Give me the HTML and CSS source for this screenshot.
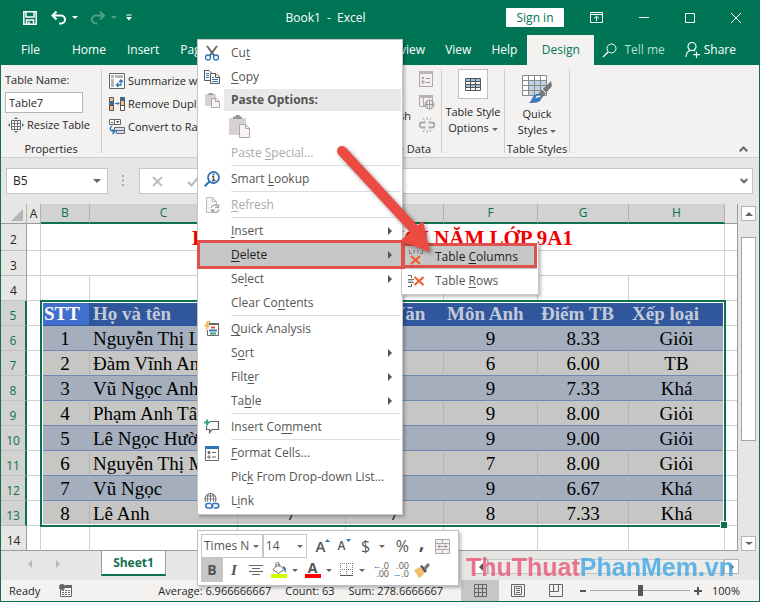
FILE: index.html
```html
<!DOCTYPE html>
<html lang="en">

<head>
    <meta charset="UTF-8">
    <meta name="viewport" content="width=device-width, initial-scale=1.0">
    <title>Book1 - Excel</title>
    <link rel="stylesheet" href="styles.css">
</head>

<body>
    <div class="window">

        <!-- Title bar -->
        <header class="titlebar">
            <div class="quick-access">
                <button class="icon-btn" aria-label="Save">
                    <svg width="14" height="14" viewBox="0 0 14 14"><path d="M0.8 0.8H13.2V13.2H0.8Z M3 1V6H11V1 M3.5 13V9H10.5V13 M6 10.5V13" fill="none" stroke="#fff" stroke-width="1.5"/></svg>
                </button>
                <button class="icon-btn undo" aria-label="Undo">
                    <svg width="16" height="14" viewBox="0 0 16 14"><path d="M1.5 4.5H10A4 4 0 0 1 10 12.5H8M5.5 0.5L1.5 4.5L5.5 8.5" fill="none" stroke="#fff" stroke-width="2"/></svg>
                    <span class="caret light"></span>
                </button>
                <button class="icon-btn faded" aria-label="Redo">
                    <svg width="16" height="14" viewBox="0 0 16 14"><path d="M14 4.5H6A4 4 0 0 0 6 12.5H7.5M10 0.5L14 4.5L10 8.5" fill="none" stroke="#fff" stroke-width="2"/></svg>
                    <span class="caret light"></span>
                </button>
                <button class="icon-btn customize" aria-label="Customize">
                    <svg width="6" height="7" viewBox="0 0 6 7"><path d="M0.5 1H5.5" stroke="#fff" stroke-width="1"/><path d="M0 3H6L3 6.5Z" fill="#fff"/></svg>
                </button>
            </div>
            <div class="title">Book1&nbsp; -&nbsp; Excel</div>
            <div class="window-controls">
                <button class="sign-in">Sign in</button>
                <button class="icon-btn" aria-label="Ribbon display options">
                    <svg width="13" height="11" viewBox="0 0 13 11"><path d="M0.5 0.5H12.5V10.5H0.5Z M0.5 2.5H12.5 M6.5 9V4.5 M4 6.5L6.5 4.2L9 6.5" fill="none" stroke="#fff"/></svg>
                </button>
                <button class="icon-btn" aria-label="Minimize">
                    <svg width="10" height="10" viewBox="0 0 10 10"><path d="M0 4.5H10" stroke="#fff"/></svg>
                </button>
                <button class="icon-btn" aria-label="Maximize">
                    <svg width="10" height="10" viewBox="0 0 10 10"><path d="M0.5 0.5H9.5V9.5H0.5Z" fill="none" stroke="#fff"/></svg>
                </button>
                <button class="icon-btn" aria-label="Close">
                    <svg width="10" height="10" viewBox="0 0 10 10"><path d="M0 0L10 10M10 0L0 10" stroke="#fff"/></svg>
                </button>
            </div>
        </header>

        <!-- Ribbon tabs -->
        <nav class="tabs">
            <div class="tabs-left">
                <button class="file">File</button>
                <button>Home</button>
                <button>Insert</button>
                <button>Page Layout</button>
                <button>Formulas</button>
            </div>
            <div class="tabs-right">
                <button>Review</button>
                <button>View</button>
                <button>Help</button>
                <button class="active">Design</button>
                <button class="tell-me">
                    <svg width="15" height="15" viewBox="0 0 15 15"><circle cx="9.5" cy="5.5" r="4.5" fill="none" stroke="#fff"/><path d="M6.3 8.7L1 14" stroke="#fff" stroke-width="1.3"/></svg>
                    Tell me
                </button>
                <button class="share">
                    <svg width="16" height="16" viewBox="0 0 16 16"><circle cx="7" cy="4.5" r="4" fill="none" stroke="#fff" stroke-width="1.2"/><path d="M1 15C1 11 3 9 5.5 8.2M8.5 8.2L10 9M11.5 9.5V16M8.3 12.7H15" fill="none" stroke="#fff" stroke-width="1.2"/></svg>
                    Share
                </button>
            </div>
        </nav>

        <!-- Ribbon -->
        <section class="ribbon">
            <div class="group properties">
                <div class="group-body">
                    <label for="table-name">Table Name:</label>
                    <input id="table-name" type="text" value="Table7">
                    <button class="tool resize">
                        <svg width="16" height="16" viewBox="0 0 16 16"><path d="M3.5 3.5H12.5V12.5H3.5Z" fill="#fff" stroke="#666"/><path d="M3.5 6.5H12.5M3.5 9.5H12.5M6.5 3.5V12.5M9.5 3.5V12.5" stroke="#777"/><path d="M8 0L10 2H6ZM8 16L10 14H6ZM0 8L2 6V10ZM16 8L14 6V10Z" fill="#2e75b6"/></svg>
                        Resize Table
                    </button>
                </div>
                <div class="group-title">Properties</div>
            </div>
            <div class="group tools">
                <div class="group-body">
                    <button class="tool">
                        <svg width="16" height="16" viewBox="0 0 16 16"><path d="M0.5 0.5H15.5V15.5H0.5Z" fill="#fff" stroke="#666"/><path d="M2 2H5V5H2ZM6 2H14V5H6ZM2 6H5V14H2Z" fill="#b5b5b5"/><path d="M8 12H12V7M9.5 10L7.5 12L9.5 14M10 9L12 7L14 9" fill="none" stroke="#2e75b6" stroke-width="1.3"/></svg>
                        Summarize with PivotTable
                    </button>
                    <button class="tool">
                        <svg width="16" height="16" viewBox="0 0 16 16"><path d="M0.5 1.5H4.5V14.5H0.5ZM11.5 1.5H15.5V14.5H11.5Z" fill="#f4c27a" stroke="#555"/><path d="M0 5H5V9H0ZM11 1H16V5H11Z" fill="#44668c"/><path d="M12 9.5H15V14H12Z" fill="#fff"/><path d="M0.5 9.5H4.5M11.5 9.5H15.5" stroke="#555"/><path d="M6 7.5H10M8.5 6L10 7.5L8.5 9" fill="none" stroke="#2e75b6"/></svg>
                        Remove Duplicates
                    </button>
                    <button class="tool">
                        <svg width="16" height="16" viewBox="0 0 16 16"><path d="M0.5 0.5H11.5V5.5H0.5ZM5.5 0.5V5.5" fill="#fff" stroke="#666"/><path d="M7 2H10.5L8.7 4.2Z M2 3H4V4H2Z" fill="#555"/><path d="M5.5 8.5H15.5V11.5H5.5ZM7.5 11.5H15.5V14.5H7.5Z" fill="#d5e1ee" stroke="#667"/><path d="M3 7C0 9 1 12.5 5.5 12.5M3.5 10.5L5.8 12.5L3.5 15" fill="none" stroke="#2e75b6" stroke-width="1.4"/></svg>
                        Convert to Range
                    </button>
                </div>
                <div class="group-title">Tools</div>
            </div>
            <div class="group external">
                <div class="external-body">
                    <button class="big-tool">
                        <svg width="30" height="32" viewBox="0 0 30 32"><path d="M24 15A9 9 0 0 0 9 10M24 6V15H16M6 19A9 9 0 0 0 21 24M6 28V19H14" fill="none" stroke="#b5b5b5" stroke-width="3"/></svg>
                        <span>Refresh</span>
                    </button>
                    <div class="icon-stack">
                        <svg width="14" height="16" viewBox="0 0 14 16"><path d="M0.5 0.5H13.5V15.5H0.5Z" fill="#f4eef0" stroke="#aaa"/><path d="M0 0H14V3H0Z" fill="#b8b3b4"/><circle cx="4" cy="7" r="1.3" fill="#aaa"/><circle cx="4" cy="11" r="1.2" fill="none" stroke="#999"/><path d="M7 7.5H11M7 11.5H11" stroke="#999"/></svg>
                        <svg width="16" height="16" viewBox="0 0 16 16"><path d="M0.5 1.5H13.5V12.5H0.5ZM4.5 1.5V12.5" fill="#f4eef0" stroke="#aaa"/><path d="M0 1H14V4H0Z" fill="#b8b3b4"/><circle cx="10.5" cy="10.5" r="4.5" fill="#f4eef0" stroke="#999"/><path d="M6 10.5H15M10.5 6V15M8 7C7.5 10 7.5 12 8.5 14.5M13 7C13.5 10 13.5 12 12.5 14.5" stroke="#999" fill="none"/></svg>
                        <svg width="16" height="16" viewBox="0 0 16 16"><path d="M6.5 5.5H3A2.5 2.5 0 0 0 3 10.5H6.5M9.5 5.5H13A2.5 2.5 0 0 1 13 10.5H9.5" fill="none" stroke="#aaa" stroke-width="2"/><path d="M8 0V3M8 13V16M4 1L5.5 3.5M12 1L10.5 3.5M4 15L5.5 12.5M12 15L10.5 12.5" stroke="#aaa"/></svg>
                    </div>
                </div>
                <div class="group-title">External Table Data</div>
            </div>
            <div class="group options">
                <button class="big-tool">
                    <span class="icon-frame">
                        <svg width="16" height="13" viewBox="0 0 16 13"><path d="M0.5 0.5H15.5V12.5H0.5Z" fill="#fff" stroke="#555"/><path d="M1 1H15V3H1ZM1 6H15V9H1Z" fill="#9fc0dc"/><path d="M0.5 3.5H15.5M0.5 6.5H15.5M0.5 9.5H15.5M5.5 0.5V12.5M10.5 0.5V12.5" stroke="#555"/></svg>
                    </span>
                    <span>Table Style<br>Options <i class="caret"></i></span>
                </button>
            </div>
            <div class="group styles">
                <button class="big-tool quick-styles">
                    <svg width="30" height="28" viewBox="0 0 30 28"><path d="M0.5 0.5H24.5V20.5H0.5Z" fill="#fff"/><path d="M6 5H24V20H6Z" fill="#bcd3e8"/><path d="M0.5 0.5H24.5V20.5H0.5ZM0.5 5.5H24.5M0.5 10.5H24.5M0.5 15.5H24.5M6.5 0.5V20.5M12.5 0.5V20.5M18.5 0.5V20.5" fill="none" stroke="#888"/><path d="M29 6L15 20L19 24L30 11Z" fill="#777"/><path d="M20 14L24 18" stroke="#fff"/><path d="M7 28C10 26 10 20 15 19C19 19 21 23 18 26C15 28 11 28 7 28Z" fill="#3c78b8"/><path d="M14 23C15 21 17 21 18 22" stroke="#fff" stroke-width="1.5" fill="none"/></svg>
                    <span>Quick<br>Styles <i class="caret"></i></span>
                </button>
                <div class="group-title">Table Styles</div>
            </div>
            <button class="collapse" aria-label="Collapse the ribbon">
                <svg width="9" height="6" viewBox="0 0 9 6"><path d="M0.7 5.3L4.5 1.5L8.3 5.3" fill="none" stroke="#666" stroke-width="2"/></svg>
            </button>
        </section>

        <!-- Formula bar -->
        <section class="formula-bar">
            <div class="name-box">
                <input type="text" value="B5" aria-label="Name box">
                <span class="caret"></span>
            </div>
            <svg class="grip" width="3" height="12" viewBox="0 0 3 12"><path d="M0 0H2V2H0ZM0 4.5H2V6.5H0ZM0 9H2V11H0Z" fill="#aaa"/></svg>
            <div class="formula">
                <svg width="11" height="11" viewBox="0 0 11 11"><path d="M1 1L10 10M10 1L1 10" stroke="#bbb" stroke-width="1.8"/></svg>
                <svg width="12" height="11" viewBox="0 0 12 11"><path d="M1 6L4.5 9.5L11 1.5" fill="none" stroke="#bbb" stroke-width="2.2"/></svg>
                <input type="text" value="" aria-label="Formula">
                <svg width="8" height="6" viewBox="0 0 8 6"><path d="M0.7 1L4 4.3L7.3 1" fill="none" stroke="#666" stroke-width="2"/></svg>
            </div>
        </section>

        <!-- Worksheet -->
        <main class="sheet">
            <div class="grid">
                <table>
                    <colgroup>
                        <col class="c-num"><col class="c-a"><col class="c-b"><col class="c-c"><col class="c-d"><col class="c-e"><col class="c-f"><col class="c-g"><col class="c-h"><col>
                    </colgroup>
                    <thead>
                        <tr>
                            <th class="corner"><svg width="12" height="12" viewBox="0 0 12 12"><path d="M12 0V12H0Z" fill="#b5b5b5"/></svg></th>
                            <th class="plain">A</th>
                            <th>B</th>
                            <th>C</th>
                            <th>D</th>
                            <th>E</th>
                            <th>F</th>
                            <th>G</th>
                            <th>H</th>
                            <th class="rest"></th>
                        </tr>
                    </thead>
                    <tbody>
                        <tr class="title-row"><th>2</th><td></td><td class="sheet-title" colspan="7">BẢNG TỔNG KẾT CUỐI NĂM LỚP 9A1</td><td></td></tr>
                        <tr><th>3</th><td></td><td colspan="7"></td><td></td></tr>
                        <tr><th>4</th><td></td><td></td><td></td><td></td><td></td><td></td><td></td><td></td><td></td></tr>
                        <tr class="sel head"><th>5</th><td></td><td class="current">STT</td><td>Họ và tên</td><td>Môn Toán</td><td>Môn Văn</td><td>Môn Anh</td><td>Điểm TB</td><td>Xếp loại</td><td></td></tr>
                        <tr class="sel band"><th>6</th><td></td><td>1</td><td>Nguyễn Thị Lan</td><td>8</td><td>8</td><td>9</td><td>8.33</td><td>Giỏi</td><td></td></tr>
                        <tr class="sel"><th>7</th><td></td><td>2</td><td>Đàm Vĩnh Anh</td><td>6</td><td>6</td><td>6</td><td>6.00</td><td>TB</td><td></td></tr>
                        <tr class="sel band"><th>8</th><td></td><td>3</td><td>Vũ Ngọc Anh</td><td>7</td><td>6</td><td>9</td><td>7.33</td><td>Khá</td><td></td></tr>
                        <tr class="sel"><th>9</th><td></td><td>4</td><td>Phạm Anh Tâm</td><td>8</td><td>7</td><td>9</td><td>8.00</td><td>Giỏi</td><td></td></tr>
                        <tr class="sel band"><th>10</th><td></td><td>5</td><td>Lê Ngọc Hường</td><td>9</td><td>9</td><td>9</td><td>9.00</td><td>Giỏi</td><td></td></tr>
                        <tr class="sel"><th>11</th><td></td><td>6</td><td>Nguyễn Thị Mai</td><td>9</td><td>8</td><td>7</td><td>8.00</td><td>Giỏi</td><td></td></tr>
                        <tr class="sel band"><th>12</th><td></td><td>7</td><td>Vũ Ngọc</td><td>5</td><td>6</td><td>9</td><td>6.67</td><td>Khá</td><td></td></tr>
                        <tr class="sel"><th>13</th><td></td><td>8</td><td>Lê Anh</td><td>7</td><td>7</td><td>8</td><td>7.33</td><td>Khá</td><td></td></tr>
                        <tr class="last"><th>14</th><td></td><td></td><td></td><td></td><td></td><td></td><td></td><td></td><td></td></tr>
                    </tbody>
                </table>
                <div class="marquee"></div>
            </div>
            <div class="vscroll">
                <button aria-label="Scroll up"><span class="caret up"></span></button>
                <div class="thumb"></div>
                <button aria-label="Scroll down"><span class="caret"></span></button>
            </div>
        </main>

        <!-- Sheet tabs -->
        <section class="sheet-tabs">
            <div class="nav-arrows"><span class="tri left"></span><span class="tri"></span></div>
            <button class="sheet-tab">Sheet1</button>
            <div class="hscroll">
                <button aria-label="Scroll left"><span class="tri left"></span></button>
                <div class="track"></div>
                <button aria-label="Scroll right"><span class="tri"></span></button>
            </div>
            <div class="watermark">ThuThuat<span>PhanMem.vn</span></div>
        </section>

        <!-- Status bar -->
        <footer class="status-bar">
            <span class="ready">Ready</span>
            <svg width="13" height="13" viewBox="0 0 13 13"><path d="M1.5 3.5H12.5V12.5H1.5Z" fill="#fff" stroke="#666"/><path d="M6 1H13V4H6ZM3 6H5V7H3ZM6 6H8V7H6ZM9 6H11V7H9ZM3 8H5V9H3ZM6 8H8V9H6ZM9 8H11V9H9ZM3 10H5V11H3ZM6 10H8V11H6ZM9 10H11V11H9Z" fill="#666"/><circle cx="3" cy="3" r="3" fill="#666"/></svg>
            <div class="stats">
                <span>Average: 6.966666667</span>
                <span>Count: 63</span>
                <span>Sum: 278.6666667</span>
            </div>
            <div class="views">
                <button class="active" aria-label="Normal view">
                    <svg width="13" height="13" viewBox="0 0 13 13"><path d="M0.5 0.5H12.5V12.5H0.5ZM4.5 0.5V12.5M8.5 0.5V12.5M0.5 4.5H12.5M0.5 8.5H12.5" fill="none" stroke="#666"/></svg>
                </button>
                <button aria-label="Page layout view">
                    <svg width="14" height="13" viewBox="0 0 14 13"><path d="M0.5 0.5H13.5V12.5H0.5ZM3.5 2.5H10.5V10.5H3.5ZM5 4.5H9M5 6.5H9M5 8.5H9" fill="none" stroke="#666"/></svg>
                </button>
                <button aria-label="Page break view">
                    <svg width="14" height="13" viewBox="0 0 14 13"><path d="M0.5 0.5H13.5V12.5H0.5ZM4.5 0.5V7.5M9.5 0.5V7.5M0.5 7.5H9.5" fill="none" stroke="#666"/></svg>
                </button>
            </div>
            <div class="zoom">
                <svg width="6" height="10" viewBox="0 0 6 10"><path d="M0 5H6" stroke="#555" stroke-width="2"/></svg>
                <input type="range" min="0" max="100" value="50" aria-label="Zoom">
                <svg width="8" height="10" viewBox="0 0 8 10"><path d="M0 5H8M4 1V9" stroke="#555" stroke-width="2"/></svg>
                <span>100%</span>
            </div>
        </footer>

        <!-- Context menu -->
        <div class="menu context-menu">
            <button>
                <svg viewBox="0 0 16 16"><path d="M3 1L10.5 11M13 1L5.5 11" stroke="#666" stroke-width="2"/><circle cx="4" cy="12.5" r="2.5" fill="none" stroke="#2e75b6" stroke-width="1.3"/><circle cx="12" cy="12.5" r="2.5" fill="none" stroke="#2e75b6" stroke-width="1.3"/></svg>
                <span>Cu<u>t</u></span>
            </button>
            <button>
                <svg viewBox="0 0 16 16"><path d="M0.5 1.5H5L7.5 4V11.5H0.5Z" fill="#fff" stroke="#555"/><path d="M2 4.5H5M2 6.5H5M2 8.5H5" stroke="#2e75b6"/><path d="M6.5 4.5H12L15.5 8V14.5H6.5Z" fill="#fff" stroke="#555"/><path d="M11.5 4.5V8.5H15.5" fill="none" stroke="#555"/><path d="M8 8.5H10M8 10.5H14M8 12.5H14" stroke="#2e75b6"/></svg>
                <span><u>C</u>opy</span>
            </button>
            <div class="menu-title">
                <svg viewBox="0 0 16 16"><path d="M1 2H12V14H1Z" fill="#d8d0d2"/><path d="M4 3V1.5H5.5A1.5 1.5 0 0 1 8 1.5H9.5V3Z" fill="#999"/><path d="M7.5 6.5H12L15.5 9.5V15.5H7.5Z" fill="#f8f2f4" stroke="#aaa"/><path d="M11.5 6.5V9.5H15.5" fill="none" stroke="#aaa"/></svg>
                <span>Paste Options:</span>
            </div>
            <div class="paste-options">
                <svg viewBox="0 0 22 23"><path d="M0 3H17V20H0Z" fill="#d8d0d2"/><path d="M4 4V1.5H6.5A2 2 0 0 1 11 1.5H13V4Z" fill="#999"/><path d="M10.5 9.5H16.5L20.5 13.5V22.5H10.5Z" fill="#f8f2f4" stroke="#aaa"/><path d="M16.5 9.5V13.5H20.5" fill="none" stroke="#aaa"/></svg>
            </div>
            <button disabled><span>Paste <u>S</u>pecial...</span></button>
            <hr>
            <button>
                <svg viewBox="0 0 16 16"><circle cx="9.5" cy="6.5" r="5.5" fill="#fff" stroke="#2e75b6" stroke-width="1.8"/><path d="M5.5 10.5L0.8 15.2" stroke="#2e75b6" stroke-width="2.2"/><path d="M8 5.5H9.5V9.5M8 9.5H11.5M8.7 3.5H10.3" fill="none" stroke="#555" stroke-width="1.4"/></svg>
                <span>Smart <u>L</u>ookup</span>
            </button>
            <hr>
            <button disabled>
                <svg viewBox="0 0 16 16"><path d="M2.5 0.5H8.5L12.5 4.5V15.5H2.5Z" fill="#f8f2f4" stroke="#bbb"/><path d="M8.5 0.5V4.5H12.5" fill="none" stroke="#bbb"/><path d="M6 8H16V16H6Z" fill="#fff"/><path d="M7 11A4 4 0 0 1 14 9.5M14.5 7V10.5H11M15 12.5A4 4 0 0 1 8 14M7.5 16V13H11" fill="none" stroke="#aaa" stroke-width="1.4"/></svg>
                <span><u>R</u>efresh</span>
            </button>
            <hr>
            <button><span><u>I</u>nsert</span><i class="tri"></i></button>
            <button class="hover"><span><u>D</u>elete</span><i class="tri"></i></button>
            <button><span>Se<u>l</u>ect</span><i class="tri"></i></button>
            <button><span>Clear Co<u>n</u>tents</span></button>
            <hr>
            <button>
                <svg viewBox="0 0 16 16"><path d="M4.5 2.5H14.5V14.5H3.5V9" fill="#fff" stroke="#666"/><path d="M5 2H15V4H5Z" fill="#666"/><path d="M7 6.5H11" stroke="#e8502a" stroke-width="2"/><path d="M5 9.5H13" stroke="#3c78b8" stroke-width="2"/><path d="M6 12.5H12" stroke="#3d9d8c" stroke-width="2"/><path d="M3 0H7L4.5 4H6L1 11L2.5 6H0Z" fill="#f0bd6c"/></svg>
                <span><u>Q</u>uick Analysis</span>
            </button>
            <button><span>S<u>o</u>rt</span><i class="tri"></i></button>
            <button><span>Filt<u>e</u>r</span><i class="tri"></i></button>
            <button><span>Ta<u>b</u>le</span><i class="tri"></i></button>
            <hr>
            <button>
                <svg viewBox="0 0 16 16"><path d="M6 2.5H14.5V10.5H8L5.5 13.5V10.5H2.5V7" fill="none" stroke="#666" stroke-width="1.2"/><path d="M0 3.5H6M3 0.5V6.5" stroke="#3d9d8c" stroke-width="2"/></svg>
                <span>Insert Co<u>m</u>ment</span>
            </button>
            <hr>
            <button>
                <svg viewBox="0 0 16 16"><path d="M1.5 1.5H14.5V15.5H1.5Z" fill="#fff" stroke="#666"/><path d="M1 1H15V4H1Z" fill="#2e75b6"/><circle cx="5" cy="7.5" r="1.5" fill="#666"/><circle cx="5" cy="12" r="1.2" fill="none" stroke="#666"/><path d="M8 7.5H12M8 12H12" stroke="#666"/></svg>
                <span><u>F</u>ormat Cells...</span>
            </button>
            <button><span>Pic<u>k</u> From Drop-down List...</span></button>
            <button>
                <svg viewBox="0 0 16 16"><circle cx="6.5" cy="6" r="5.5" fill="#fff" stroke="#666"/><path d="M1 6H12M6.5 0.5V11M2 3H11M4.5 1C3 4 3 8 4.5 11M8.5 1C10 4 10 8 8.5 11" fill="none" stroke="#666" stroke-width="0.8"/><path d="M0 9H16V16H0Z" fill="#fff"/><path d="M7 10.5H4A2 2 0 0 0 4 15H7A2 2 0 0 0 8.5 12M10 15H12.5A2 2 0 0 0 12.5 10.5H9.5A2 2 0 0 0 8 13.5" fill="none" stroke="#2e75b6" stroke-width="1.6"/></svg>
                <span>L<u>i</u>nk</span>
            </button>
        </div>

        <!-- Delete submenu -->
        <div class="menu submenu">
            <button class="hover">
                <svg viewBox="0 0 16 16"><path d="M1.5 1V4.5H4M14.5 1V4.5H12M6 4.5V1M10 4.5V1" fill="none" stroke="#777"/><path d="M3 7L12 15M12 7L3 15" stroke="#f05a28" stroke-width="2"/></svg>
                <span>Table <u>C</u>olumns</span>
            </button>
            <button>
                <svg viewBox="0 0 16 16"><path d="M0 2.5H3.5V5M0 13.5H3.5V11" fill="none" stroke="#666"/><path d="M0 6H5V10H0Z" fill="#b9cadb"/><path d="M0 6.5H6M0 9.5H6" stroke="#777"/><path d="M6.5 4L15.5 12M15.5 4L6.5 12" stroke="#f05a28" stroke-width="2"/></svg>
                <span>Table <u>R</u>ows</span>
            </button>
        </div>

        <!-- Mini toolbar -->
        <div class="mini-toolbar">
            <div class="mini-row">
                <div class="combo font-name"><select aria-label="Font"><option>Times New Roman</option></select><span class="caret"></span></div>
                <div class="combo font-size"><select aria-label="Font size"><option>14</option></select><span class="caret"></span></div>
                <button class="grow">A<svg width="5" height="3" viewBox="0 0 5 3"><path d="M0 3H5L2.5 0Z" fill="#2e75b6"/></svg></button>
                <button class="shrink">A<svg width="5" height="3" viewBox="0 0 5 3"><path d="M0 0H5L2.5 3Z" fill="#2e75b6"/></svg></button>
                <button class="currency">$<span class="caret"></span></button>
                <button class="percent">%</button>
                <button class="comma">,</button>
                <button class="merge" aria-label="Merge and center">
                    <svg width="15" height="15" viewBox="0 0 15 15"><path d="M0.5 0.5H14.5V14.5H0.5ZM0.5 4.5H14.5M0.5 10.5H14.5M7.5 0.5V4.5M7.5 10.5V14.5" fill="#f6eff1" stroke="#aaa"/><path d="M3 7.5H12M5 5.5L3 7.5L5 9.5M10 5.5L12 7.5L10 9.5" fill="none" stroke="#999"/></svg>
                </button>
            </div>
            <div class="mini-row">
                <button class="bold">B</button>
                <button class="italic">I</button>
                <button class="align" aria-label="Center">
                    <svg width="14" height="11" viewBox="0 0 14 11"><path d="M0 0.5H14M3 3.5H11M0 6.5H14M3 9.5H11" stroke="#666"/></svg>
                </button>
                <button class="with-caret" aria-label="Fill color">
                    <svg width="16" height="16" viewBox="0 0 16 16"><path d="M7.5 2L13 7.5L7.5 11.5L2 7.5Z" fill="#fff" stroke="#666"/><path d="M5 5V1.5A1.5 1.5 0 0 1 8 1.5V5" fill="none" stroke="#666"/><path d="M12 4C15 5 15.5 8 14.5 11C13 9 13.5 7 12 6Z" fill="#3c78b8"/><path d="M0 12H16V16H0Z" fill="#ccff00"/></svg>
                    <span class="caret"></span>
                </button>
                <button class="with-caret"><span class="color-letter">A</span><span class="caret"></span></button>
                <button class="with-caret" aria-label="Borders">
                    <svg width="14" height="14" viewBox="0 0 14 14"><path d="M0.5 0V13M6.5 0V13M12.5 0V13M0 0.5H13M0 6.5H13" stroke="#777" stroke-dasharray="1 1"/><path d="M0 12.5H13" stroke="#555"/></svg>
                    <span class="caret"></span>
                </button>
                <button class="decimal"><span><b>←</b>.0</span><span>.00</span></button>
                <button class="decimal"><span>.00</span><span><b>→</b>.0</span></button>
                <button class="painter" aria-label="Format painter">
                    <svg width="16" height="15" viewBox="0 0 16 15"><path d="M0 7L6 4L11 9L8 13L5 15Z" fill="#f0bd6c"/><path d="M6 3L8 2L13 8L11 10Z" fill="#555"/><path d="M10 4L14 0L16 2L12 7Z" fill="#777"/></svg>
                </button>
            </div>
        </div>

        <!-- Highlights and pointer arrow -->
        <div class="mark mark-delete"></div>
        <div class="mark mark-columns"></div>
        <svg class="pointer" width="100" height="115" viewBox="0 0 100 115">
            <path d="M12 11L84 89" stroke="#ec4b44" stroke-width="10" stroke-linecap="round"/>
            <path d="M100 112L93 81L70 101Z" fill="#ec4b44"/>
        </svg>
    </div>
</body>

</html>
```
FILE: styles.css
```css
* {
    box-sizing: border-box;
}

body {
    margin: 0;
    font-family: 'Open Sans', 'Noto Sans', sans-serif;
    font-size: 12px;
    line-height: 16px;
    color: #262626;
    background-color: #e6e6e4;
}

button,
input,
select {
    font: inherit;
    color: inherit;
    background: none;
    border: 0;
    margin: 0;
    padding: 0;
    outline: 0;
}

svg {
    display: block;
    flex: none;
}

.window {
    position: relative;
    border: 1px solid #0f7050;
    border-top: 0;
    overflow: hidden;
}

.caret {
    display: inline-block;
    flex: none;
    border: 3px solid transparent;
    border-top-color: #666;
    border-bottom-width: 0;
    vertical-align: middle;
}

.caret.light {
    border-top-color: #fff;
}

.caret.up {
    border-top-width: 0;
    border-bottom: 4px solid #666;
}

.tri {
    display: inline-block;
    flex: none;
    border: 4px solid transparent;
    border-left-color: #555;
    border-right-width: 0;
}

.tri.left {
    border-left-width: 0;
    border-right: 4px solid #555;
}

/* title bar */
.titlebar {
    display: flex;
    align-items: center;
    justify-content: space-between;
    height: 35px;
    padding: 0 18px 0 22px;
    background-color: #007555;
    color: #fff;
}

.quick-access,
.window-controls {
    display: flex;
    align-items: center;
}

.quick-access {
    flex: 5 1 0;
}

.icon-btn {
    display: flex;
    align-items: center;
    gap: 5px;
}

.undo {
    margin: 0 12px 0 14px;
}

.faded {
    opacity: 0.3;
}

.customize {
    margin-left: 9px;
}

.title {
    padding-right: 8px;
}

.window-controls {
    flex: 7 1 0;
    justify-content: flex-end;
    gap: 36px;
}

.sign-in {
    width: 58px;
    height: 19px;
    margin-right: -10px;
    background-color: #fff;
    color: #007555;
    border-radius: 1px;
}

/* tabs */
.tabs {
    display: flex;
    justify-content: space-between;
    height: 30px;
    background-color: #007555;
}

.tabs button {
    color: #fff;
    white-space: nowrap;
}

.tabs-left,
.tabs-right {
    display: flex;
}

.tabs-left {
    gap: 21px;
    padding-left: 20px;
}

.tabs-right {
    gap: 20px;
    padding-right: 23px;
}

.file {
    margin-right: 11px;
}

.tabs .active {
    width: 67px;
    margin: 0 -12px 0 -10px;
    background-color: #f3f2f1;
    color: #007555;
}

.tell-me,
.share {
    display: flex;
    align-items: center;
    gap: 3px;
}

.tabs .tell-me {
    color: #b9ded2;
    gap: 7px;
}

/* ribbon */
.ribbon {
    display: flex;
    height: 93px;
    padding: 4px 0;
    background-color: #f3f2f1;
    border-bottom: 1px solid #cfcfcd;
    font-size: 11px;
}

.group {
    display: flex;
    flex-direction: column;
    justify-content: space-between;
    flex: none;
    border-right: 1px solid #cfcfcd;
    white-space: nowrap;
}

.group-title {
    margin-bottom: -4px;
    text-align: center;
}

.properties {
    width: 101px;
}

.tools {
    width: 230px;
    padding-left: 7px;
}

.external {
    width: 110px;
}

.external .group-title {
    display: flex;
    justify-content: flex-end;
    padding-right: 10px;
}

.options {
    width: 63px;
}

.styles {
    width: 65px;
}

.properties .group-body {
    padding: 3px 0 0 4px;
}

.properties label {
    display: block;
}

.properties input {
    display: block;
    width: 78px;
    height: 21px;
    margin: 4px 0;
    padding-left: 3px;
    background-color: #fff;
    border: 1px solid #b5b5b5;
}

.tool {
    display: flex;
    align-items: center;
    gap: 3px;
    height: 23px;
}

.tool.resize {
    padding-left: 3px;
    height: 16px;
}

.external-body {
    display: flex;
    justify-content: flex-end;
    gap: 8px;
    padding-right: 6px;
}

.icon-stack {
    display: flex;
    flex-direction: column;
    gap: 7px;
    padding-top: 2px;
}

.big-tool {
    display: flex;
    flex-direction: column;
    align-items: center;
    gap: 5px;
}

.external .big-tool {
    padding-top: 2px;
}

.icon-frame {
    display: flex;
    align-items: center;
    justify-content: center;
    width: 30px;
    height: 30px;
    background-color: #fff;
    border: 1px solid #c0c0c0;
}

.quick-styles {
    padding-top: 6px;
    gap: 3px;
}

.collapse {
    margin: auto 11px 1px auto;
}

/* formula bar */
.formula-bar {
    display: flex;
    align-items: center;
    gap: 14px;
    height: 46px;
    padding: 0 6px 0 5px;
}

.name-box,
.formula {
    display: flex;
    align-items: center;
    height: 26px;
    background-color: #fff;
    border: 1px solid #c6c6c6;
}

.name-box {
    width: 102px;
    padding: 0 6px;
}

.name-box input {
    flex: 1;
    min-width: 0;
}

.name-box .caret {
    border-width: 4px 4px 0;
}

.formula {
    flex: 1;
    gap: 24px;
    padding: 0 4px 0 12px;
}

.formula input {
    flex: 1;
    min-width: 0;
}

/* worksheet */
.sheet {
    display: flex;
}

.grid {
    position: relative;
    flex: 1;
    border-right: 1px solid #9a9a9a;
}

.grid table {
    width: 100%;
    table-layout: fixed;
    border-spacing: 0;
}

.c-num { width: 26px; }
.c-a { width: 14px; }
.c-b { width: 49px; }
.c-c { width: 148px; }
.c-d { width: 108px; }
.c-e { width: 98px; }
.c-f { width: 94px; }
.c-g { width: 91px; }
.c-h { width: 96px; }

.grid th {
    padding: 0;
    font-weight: normal;
}

.grid thead th {
    height: 20px;
    background-color: #d2d2d0;
    color: #0f7050;
    border-right: 1px solid #b0b0b0;
    border-bottom: 2px solid #0f7050;
    line-height: 16px;
}

.grid thead .corner,
.grid thead .plain,
.grid thead .rest {
    background-color: #e6e6e4;
    color: #262626;
    border-bottom: 1px solid #9a9a9a;
}

.grid thead .rest {
    border-right: 0;
}

.corner svg {
    margin: 2px 0 0 10px;
}

.grid tbody tr {
    height: 25px;
}

.grid tbody .title-row {
    height: 27px;
}

.grid tbody th {
    padding-top: 6px;
    background-color: #e6e6e4;
    border-right: 1px solid #9a9a9a;
    border-bottom: 1px solid #c0c0c0;
}

.grid td {
    height: 25px;
    padding: 2px 3px 0;
    overflow: hidden;
    background-color: #fff;
    border-right: 1px solid #d0d0d0;
    border-bottom: 1px solid #d0d0d0;
    color: #000;
    font: 19px/22px 'Liberation Serif', serif;
    text-align: center;
    white-space: nowrap;
}

.grid td:last-child {
    border-right: 0;
}

.grid .sheet-title {
    color: #f00000;
    font-size: 21px;
    font-weight: bold;
}

.grid .sel th {
    background-color: #d2d2d0;
    border-right: 2px solid #0f7050;
    color: #0f7050;
}

.grid .sel td:not(:nth-child(2)):not(:last-child) {
    background-color: #c6c6c4;
    border-right-color: #b0b3b8;
    border-bottom-color: #6f87b3;
}

.grid .band td:not(:nth-child(2)):not(:last-child) {
    background-color: #a5aebd;
    border-right-color: #a5aebd;
}

.grid .sel td:nth-child(4) {
    text-align: left;
}

.grid .head td:not(:nth-child(2)):not(:last-child) {
    background-color: #30569c;
    border-color: #30569c;
    color: #c3cad8;
    font-weight: bold;
    text-align: left;
}

.grid .head td.current:not(:last-child) {
    background-color: #4070cc;
    color: #fff;
}

.grid .last th,
.grid .last td {
    border-bottom-color: #9a9a9a;
}

/* frame round the selected cells, with its fill handle */
.marquee {
    position: absolute;
    left: 39px;
    top: 96px;
    width: 686px;
    height: 227px;
    border: 2px solid #0f7050;
    box-shadow: inset 0 0 0 1px #fff;
}

.marquee::after {
    content: "";
    position: absolute;
    right: -3px;
    bottom: -3px;
    width: 6px;
    height: 6px;
    background-color: #0f7050;
    border: solid #fff;
    border-width: 1px 0 0 1px;
}

.vscroll {
    display: flex;
    flex-direction: column;
    width: 21px;
    padding: 2px 2px 0 3px;
}

.vscroll button,
.hscroll button {
    display: flex;
    align-items: center;
    justify-content: center;
    width: 15px;
    height: 15px;
    background-color: #fff;
    border: 1px solid #b5b5b5;
}

.vscroll .caret {
    border-left-width: 4px;
    border-right-width: 4px;
}

.thumb {
    flex: 1;
    width: 15px;
    margin: 16px 0 95px;
    background-color: #fff;
    border: 1px solid #a5a5a5;
}

/* sheet tabs */
.sheet-tabs {
    position: relative;
    display: flex;
    justify-content: space-between;
    height: 29px;
    padding-right: 20px;
}

.nav-arrows {
    display: flex;
    align-items: flex-start;
    gap: 24px;
    padding: 9px 0 0 27px;
    opacity: 0.3;
}

.sheet-tab {
    width: 65px;
    height: 25px;
    margin: 0 auto 0 41px;
    background-color: #fff;
    border: 1px solid #9a9a9a;
    border-width: 0 1px;
    border-bottom: 2px solid #0f7050;
    color: #0f7050;
    font-weight: bold;
}

.hscroll {
    display: flex;
    width: 266px;
    margin-top: 8px;
}

.track {
    flex: 1;
    height: 15px;
    border: 1px solid #c6c6c6;
    background-color: #ececea;
}

.watermark {
    position: absolute;
    right: 25px;
    top: 0;
    color: #e8607e;
    font: bold 25px/32px 'Liberation Sans', sans-serif;
    opacity: 0.85;
}

.watermark span {
    color: #4aaae6;
}

/* status bar */
.status-bar {
    display: flex;
    align-items: center;
    height: 22px;
    background-color: #f3f2f1;
    border-bottom: 1px solid #0f7050;
    font-size: 11px;
}

.ready {
    margin: 0 19px 0 8px;
}

.stats {
    display: flex;
    flex: 1;
    justify-content: flex-end;
    gap: 14px;
    padding-right: 18px;
    white-space: nowrap;
}

.views {
    display: flex;
    height: 21px;
}

.views button {
    display: flex;
    align-items: center;
    justify-content: center;
    width: 38px;
}

.views .active {
    background-color: #c6c6c6;
}

.zoom {
    display: flex;
    align-items: center;
    gap: 4px;
    padding: 0 19px 0 5px;
}

.zoom span {
    margin-left: 6px;
}

.zoom input {
    appearance: none;
    width: 100px;
    height: 11px;
    margin: 0;
    background: linear-gradient(#aaa, #aaa) center / 100% 1px no-repeat;
}

.zoom input::-webkit-slider-thumb {
    appearance: none;
    width: 5px;
    height: 11px;
    background-color: #555;
}

/* menus */
.menu {
    position: absolute;
    padding: 1px;
    background-color: #fff;
    border: 1px solid #c6c6c6;
    box-shadow: 2px 2px 3px rgba(0, 0, 0, 0.25);
    color: #555;
}

.context-menu {
    left: 196px;
    top: 39px;
    width: 206px;
}

.menu button,
.menu-title {
    display: grid;
    grid-template-columns: 16px 1fr auto;
    column-gap: 11px;
    align-items: center;
    width: 100%;
    height: 24px;
    padding: 0 9px 0 5px;
    text-align: left;
    white-space: nowrap;
}

.menu button span,
.menu-title span {
    grid-column: 2;
}

.menu svg {
    width: 16px;
    height: 16px;
}

.menu u {
    text-underline-offset: 2px;
}

.menu button:disabled {
    color: #aaa;
}

.menu .hover {
    background-color: #c6c6c6;
    color: #222;
}

.menu-title {
    height: 22px;
    background: linear-gradient(#e9e9e9, #e9e9e9) 25px 0 no-repeat;
    font-weight: bold;
}

.paste-options {
    height: 30px;
    padding: 4px 0 0 30px;
}

.paste-options svg {
    width: 22px;
    height: 23px;
}

.menu hr {
    height: 1px;
    margin: 0 0 1px 32px;
    border: 0;
    background-color: #d8dfe2;
}

.submenu {
    left: 400px;
    top: 243px;
    width: 138px;
}

/* mini toolbar */
.mini-toolbar {
    position: absolute;
    left: 196px;
    top: 530px;
    width: 262px;
    padding: 3px;
    background-color: #fff;
    border: 1px solid #c0c0c0;
    box-shadow: 2px 2px 3px rgba(0, 0, 0, 0.25);
    color: #555;
}

.mini-row {
    display: flex;
    align-items: center;
    height: 24px;
}

.mini-row button {
    display: flex;
    align-items: center;
    justify-content: center;
    height: 24px;
}

.combo {
    position: relative;
    height: 24px;
    border: 1px solid #c6c6c6;
}

.combo select {
    appearance: none;
    width: 100%;
    height: 22px;
    padding: 0 13px 0 2px;
}

.combo .caret {
    position: absolute;
    right: 3px;
    top: 10px;
}

.font-name {
    width: 64px;
}

.font-size {
    width: 46px;
}

.mini-row .grow,
.mini-row .shrink {
    width: 22px;
    font-size: 15px;
    font-weight: 600;
    margin-left: 5px;
}

.mini-row .shrink {
    font-size: 12px;
    margin-left: 0;
}

.grow svg,
.shrink svg {
    align-self: flex-start;
    margin-top: 5px;
}

.currency {
    gap: 9px;
    width: 38px;
}

.mini-row .currency,
.mini-row .percent {
    font-size: 16px;
}

.percent {
    width: 23px;
}

.mini-row .comma {
    width: 17px;
    padding-bottom: 8px;
    font-size: 20px;
    font-weight: bold;
}

.merge {
    width: 26px;
}

.mini-row .bold {
    width: 22px;
    background-color: #c6c6c6;
    font-size: 14px;
    font-weight: bold;
}

.mini-row .italic {
    width: 22px;
    font: italic bold 15px 'Liberation Serif', serif;
}

.align {
    width: 22px;
}

.with-caret {
    gap: 5px;
    width: 34px;
}

.color-letter {
    width: 16px;
    height: 16px;
    border-bottom: 4px solid #f00;
    font-size: 14px;
    font-weight: bold;
    line-height: 12px;
}

.mini-row .decimal {
    flex-direction: column;
    align-items: flex-end;
    width: 20px;
    font-size: 9px;
    line-height: 8px;
}

.decimal b {
    color: #2e75b6;
}

.painter {
    width: 26px;
}

/* annotations */
.mark {
    position: absolute;
    border: 3px solid #e0504c;
}

.mark-delete {
    left: 196px;
    top: 240px;
    width: 208px;
    height: 29px;
}

.mark-columns {
    left: 400px;
    top: 243px;
    width: 136px;
    height: 25px;
}

.pointer {
    position: absolute;
    left: 329px;
    top: 140px;
    filter: drop-shadow(2px 2px 2px rgba(0, 0, 0, 0.4));
}
```
